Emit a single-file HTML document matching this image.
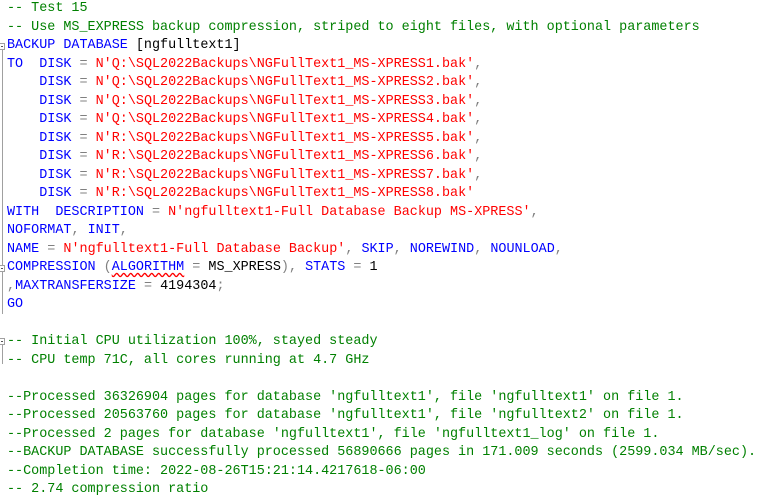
<!DOCTYPE html>
<html><head><meta charset="utf-8"><style>
html,body{margin:0;padding:0;background:#fff;width:768px;height:503px;overflow:hidden;position:relative}
pre{margin:0;position:absolute;left:7px;top:0px;font-family:"Liberation Mono",monospace;font-size:13.43px;line-height:18.5px;color:#000}
.c{color:#008000}.k{color:#0000ff}.s{color:#ff0000}.g{color:#808080}
.w{text-decoration:underline wavy #ff0000;text-underline-offset:2px}
.bx{position:absolute;left:-1px;width:6px;height:7px;border:1px solid #a0a0a0;background:#fff;box-sizing:border-box}
.bx:after{content:"";position:absolute;left:1px;top:2px;width:2px;height:1px;background:#555}
.vl{position:absolute;left:2px;width:1px;background:#a0a0a0}
</style></head><body>
<div class="vl" style="top:49px;height:265px"></div>
<div class="vl" style="top:270px;height:32px"></div>
<div class="vl" style="top:344px;height:20px"></div>
<div class="bx" style="top:43px"></div>
<div class="bx" style="top:265px"></div>
<div class="bx" style="top:338px"></div>
<pre><span class="c">-- Test 15</span>
<span class="c">-- Use MS_EXPRESS backup compression, striped to eight files, with optional parameters</span>
<span class="k">BACKUP DATABASE</span> [ngfulltext1]
<span class="k">TO  DISK</span> <span class="g">=</span> <span class="s">N'Q:\SQL2022Backups\NGFullText1_MS-XPRESS1.bak'</span><span class="g">,</span>
    <span class="k">DISK</span> <span class="g">=</span> <span class="s">N'Q:\SQL2022Backups\NGFullText1_MS-XPRESS2.bak'</span><span class="g">,</span>
    <span class="k">DISK</span> <span class="g">=</span> <span class="s">N'Q:\SQL2022Backups\NGFullText1_MS-XPRESS3.bak'</span><span class="g">,</span>
    <span class="k">DISK</span> <span class="g">=</span> <span class="s">N'Q:\SQL2022Backups\NGFullText1_MS-XPRESS4.bak'</span><span class="g">,</span>
    <span class="k">DISK</span> <span class="g">=</span> <span class="s">N'R:\SQL2022Backups\NGFullText1_MS-XPRESS5.bak'</span><span class="g">,</span>
    <span class="k">DISK</span> <span class="g">=</span> <span class="s">N'R:\SQL2022Backups\NGFullText1_MS-XPRESS6.bak'</span><span class="g">,</span>
    <span class="k">DISK</span> <span class="g">=</span> <span class="s">N'R:\SQL2022Backups\NGFullText1_MS-XPRESS7.bak'</span><span class="g">,</span>
    <span class="k">DISK</span> <span class="g">=</span> <span class="s">N'R:\SQL2022Backups\NGFullText1_MS-XPRESS8.bak'</span>
<span class="k">WITH  DESCRIPTION</span> <span class="g">=</span> <span class="s">N'ngfulltext1-Full Database Backup MS-XPRESS'</span><span class="g">,</span>
<span class="k">NOFORMAT</span><span class="g">,</span> <span class="k">INIT</span><span class="g">,</span>
<span class="k">NAME</span> <span class="g">=</span> <span class="s">N'ngfulltext1-Full Database Backup'</span><span class="g">,</span> <span class="k">SKIP</span><span class="g">,</span> <span class="k">NOREWIND</span><span class="g">,</span> <span class="k">NOUNLOAD</span><span class="g">,</span>
<span class="k">COMPRESSION</span> <span class="g">(</span><span class="k w">ALGORITHM</span> <span class="g">=</span> MS_XPRESS<span class="g">),</span> <span class="k">STATS</span> <span class="g">=</span> 1
<span class="g">,</span><span class="k">MAXTRANSFERSIZE</span> <span class="g">=</span> 4194304<span class="g">;</span>
<span class="k">GO</span>

<span class="c">-- Initial CPU utilization 100%, stayed steady</span>
<span class="c">-- CPU temp 71C, all cores running at 4.7 GHz</span>

<span class="c">--Processed 36326904 pages for database 'ngfulltext1', file 'ngfulltext1' on file 1.</span>
<span class="c">--Processed 20563760 pages for database 'ngfulltext1', file 'ngfulltext2' on file 1.</span>
<span class="c">--Processed 2 pages for database 'ngfulltext1', file 'ngfulltext1_log' on file 1.</span>
<span class="c">--BACKUP DATABASE successfully processed 56890666 pages in 171.009 seconds (2599.034 MB/sec).</span>
<span class="c">--Completion time: 2022-08-26T15:21:14.4217618-06:00</span>
<span class="c">-- 2.74 compression ratio</span></pre>
</body></html>
